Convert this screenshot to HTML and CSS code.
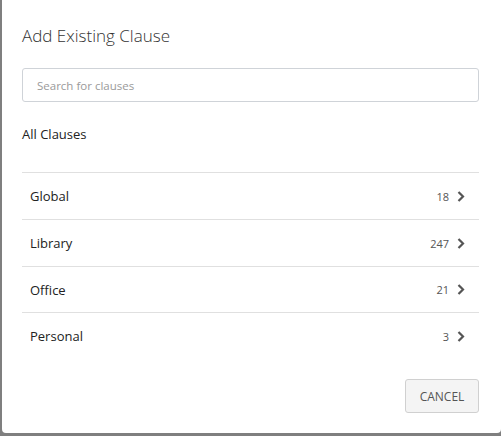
FILE: index.html
```html
<!DOCTYPE html>
<html>
<head>
<meta charset="utf-8">
<link rel="stylesheet" href="styles.css">
</head>
<body>
<div class="backdrop">
  <div class="modal">
    <h1 class="title">Add Existing Clause</h1>
    <div class="search">Search for clauses</div>
    <div class="section">All Clauses</div>
    <ul class="list">
      <li class="row"><span class="name">Global</span><span class="count">18</span><svg class="chev" viewBox="0 0 8 11" width="8" height="11"><path d="M1.5 1 L6 5.5 L1.5 10" fill="none" stroke="#555" stroke-width="2.2"/></svg></li>
      <li class="row"><span class="name">Library</span><span class="count">247</span><svg class="chev" viewBox="0 0 8 11" width="8" height="11"><path d="M1.5 1 L6 5.5 L1.5 10" fill="none" stroke="#555" stroke-width="2.2"/></svg></li>
      <li class="row"><span class="name">Office</span><span class="count">21</span><svg class="chev" viewBox="0 0 8 11" width="8" height="11"><path d="M1.5 1 L6 5.5 L1.5 10" fill="none" stroke="#555" stroke-width="2.2"/></svg></li>
      <li class="row"><span class="name">Personal</span><span class="count">3</span><svg class="chev" viewBox="0 0 8 11" width="8" height="11"><path d="M1.5 1 L6 5.5 L1.5 10" fill="none" stroke="#555" stroke-width="2.2"/></svg></li>
    </ul>
    <div class="footer"><button class="cancel">CANCEL</button></div>
  </div>
</div>
</body>
</html>
```
FILE: styles.css
```css
html, body {
  margin: 0;
  padding: 0;
  background: #7f7f7f;
  height: 436px;
  overflow: hidden;
}
.backdrop {
  padding-left: 2px;
}
.modal {
  background: #fff;
  height: 433px;
  box-sizing: border-box;
  border-radius: 0 0 4px 4px;
  padding: 0 22px 0 20px;
  font-family: "Open Sans", "Noto Sans", sans-serif;
  display: flex;
  flex-direction: column;
}
.title {
  margin: 0;
  padding-top: 24px;
  font-size: 17px;
  line-height: 24px;
  font-weight: 300;
  color: #333;
}
.search {
  margin-top: 20px;
  height: 34px;
  box-sizing: border-box;
  border: 1px solid #cfd3d8;
  border-radius: 3px;
  padding-left: 14px;
  display: flex;
  align-items: center;
  font-size: 11.5px;
  color: #9a9a9a;
}
.section {
  margin-top: 22px;
  font-size: 13px;
  line-height: 20px;
  color: #222;
}
.list {
  list-style: none;
  margin: 28px 0 0;
  padding: 0;
}
.row {
  border-top: 1px solid #e0e0e0;
  height: 46px;
  display: flex;
  align-items: center;
  padding: 0 14px 0 8px;
  font-size: 13px;
  color: #222;
}
.row:nth-child(3) {
  height: 45px;
}
.name {
  flex: 1;
}
.count {
  font-size: 11px;
  color: #555;
  margin-right: 8px;
}
.chev {
  display: block;
}
.footer {
  margin-top: auto;
  padding-bottom: 20px;
  display: flex;
  justify-content: flex-end;
}
.cancel {
  width: 74px;
  height: 34px;
  background: #f4f4f4;
  border: 1px solid #d0d0d0;
  border-radius: 3px;
  font-family: "Open Sans", "Noto Sans", sans-serif;
  font-size: 12px;
  color: #555;
  padding: 0;
}
```
